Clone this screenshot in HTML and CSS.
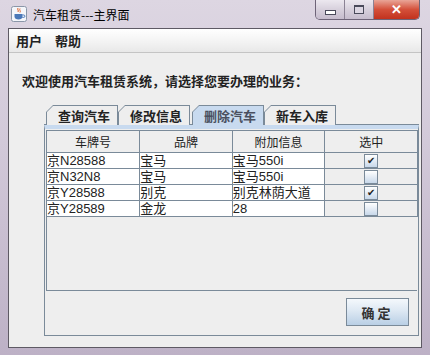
FILE: index.html
```html
<!DOCTYPE html>
<html lang="zh-CN">
<head>
  <meta charset="UTF-8">
  <title>汽车租赁---主界面</title>
  <link rel="stylesheet" href="styles.css">
</head>
<body>

  <div class="window">
    <div class="titlebar">
      <svg class="app-icon" width="16" height="16" viewBox="0 0 16 16">
        <rect x="0.5" y="0.5" width="15" height="15" rx="2" fill="#f4f6fa" stroke="#8a96a8"/>
        <path d="M7 2c-1 1.5 1 2.5 0 4M9 2.5c-1 1.5 1 2.5 0 4" stroke="#e0612a" stroke-width="1" fill="none"/>
        <path d="M3.5 8h8v2.5c0 1.8-1.6 3-4 3s-4-1.2-4-3z" fill="#4a78b8"/>
        <path d="M11.5 9h1.2a1.2 1.2 0 0 1 0 2.4h-1.4" stroke="#4a78b8" fill="none"/>
      </svg>
      <span class="title">汽车租赁---主界面</span>
      <div class="win-buttons">
        <span class="win-btn min"><i></i></span>
        <span class="win-btn max"><i></i></span>
        <span class="win-btn close">✕</span>
      </div>
    </div>

    <div class="client">
      <div class="menubar">
        <span class="menu">用户</span>
        <span class="menu">帮助</span>
      </div>

      <p class="welcome">欢迎使用汽车租赁系统，请选择您要办理的业务：</p>

      <div class="tabs">
        <span class="tab">查询汽车</span>
        <span class="tab">修改信息</span>
        <span class="tab selected">删除汽车</span>
        <span class="tab">新车入库</span>
      </div>

      <div class="tab-panel">
        <div class="scroll-pane">
          <table class="car-table">
            <thead>
              <tr><th>车牌号</th><th>品牌</th><th>附加信息</th><th>选中</th></tr>
            </thead>
            <tbody>
              <tr><td>京N28588</td><td>宝马</td><td>宝马550i</td><td class="check-cell"><span class="checkbox">✔</span></td></tr>
              <tr><td>京N32N8</td><td>宝马</td><td>宝马550i</td><td class="check-cell"><span class="checkbox"></span></td></tr>
              <tr><td>京Y28588</td><td>别克</td><td>别克林荫大道</td><td class="check-cell"><span class="checkbox">✔</span></td></tr>
              <tr><td>京Y28589</td><td>金龙</td><td>28</td><td class="check-cell"><span class="checkbox"></span></td></tr>
            </tbody>
          </table>
        </div>
        <div class="button-row">
          <button class="ok-button">确定</button>
        </div>
      </div>
    </div>
  </div>

</body>
</html>
```

FILE: styles.css
```css
body {
  margin: 0;
  font-family: "Liberation Sans", "Noto Sans CJK SC", sans-serif;
}
.window {
  width: 430px;
  height: 355px;
  box-sizing: border-box;
  padding: 0 8px 7px 8px;
  background: linear-gradient(180deg, #ddd6e2 0%, #d2c9d9 40%, #bdb1c6 100%);
  display: flex;
  flex-direction: column;
}
.titlebar {
  height: 28px;
  display: flex;
  align-items: center;
  position: relative;
}
.app-icon {
  margin: 0 6px 0 3px;
}
.title {
  font-size: 12px;
  color: #000;
  font-family: "Noto Sans CJK SC", sans-serif;
}
.win-buttons {
  position: absolute;
  top: 0;
  right: 2px;
  display: flex;
  height: 19px;
  border: 1px solid #6e6478;
  border-top: none;
  border-radius: 0 0 5px 5px;
  overflow: hidden;
}
.win-btn {
  display: flex;
  align-items: center;
  justify-content: center;
  width: 28px;
  background: linear-gradient(180deg, #ece8ef 0%, #d7d0dc 50%, #c6bccd 100%);
  border-right: 1px solid #8b8294;
}
.win-btn.min i {
  width: 9px;
  height: 3px;
  border: 1px solid #4a4a5a;
  background: #fff;
  margin-top: 5px;
}
.win-btn.max i {
  width: 8px;
  height: 6px;
  border: 1px solid #4a4a5a;
  border-top-width: 2px;
  background: #dcd6e2;
}
.win-btn.close {
  width: 45px;
  border-right: none;
  background: linear-gradient(180deg, #e9a597 0%, #d4503a 50%, #c2321e 100%);
  color: #fff;
  font-size: 13px;
  font-weight: bold;
}
.client {
  flex: 1;
  border: 1px solid #5e5a64;
  background: #eeeeee;
  display: flex;
  flex-direction: column;
}
.menubar {
  height: 23px;
  display: flex;
  align-items: center;
  padding-left: 7px;
  gap: 13px;
  background: linear-gradient(180deg, #ffffff 0%, #f2f2f2 60%, #e8e8e8 100%);
  border-bottom: 1px solid #c4c4c4;
}
.menu {
  font-family: "Noto Sans CJK SC", sans-serif;
  font-size: 13px;
  font-weight: bold;
  color: #222;
}
.welcome {
  margin: 19px 0 0 13px;
  height: 17px;
  line-height: 17px;
  font-family: "Noto Sans CJK SC", sans-serif;
  font-size: 13px;
  font-weight: bold;
  color: #222;
}
.tabs {
  display: flex;
  margin: 16px 0 0 37px;
  height: 20px;
}
.tab {
  width: 72px;
  height: 20px;
  box-sizing: border-box;
  position: relative;
  display: flex;
  align-items: center;
  justify-content: center;
  padding-left: 4px;
  font-family: "Noto Sans CJK SC", sans-serif;
  font-size: 13px;
  font-weight: bold;
  color: #222;
  background: #7a8a99;
  clip-path: polygon(7px 0, 100% 0, 100% 100%, 0 100%, 0 7px);
  z-index: 0;
}
.tab::before {
  content: "";
  position: absolute;
  inset: 1px 1px 0 1px;
  background: #eeeeee;
  clip-path: polygon(6px 0, 100% 0, 100% 100%, 0 100%, 0 6px);
  z-index: -1;
}
.tab.selected {
  margin-left: 2px;
  color: #4a5060;
}
.tab.selected::before {
  background: #c8daef;
  bottom: -1px;
}
.tab-panel {
  width: 375px;
  height: 211px;
  box-sizing: border-box;
  margin-left: 35px;
  border: 1px solid #7a8a99;
  border-top: 4px solid #c8daef;
  box-shadow: 0 -1px 0 #7a8a99;
  padding: 1px 1px 0 1px;
  display: flex;
  flex-direction: column;
}
.scroll-pane {
  height: 160px;
  border: 1px solid #7a8a99;
  border-top: none;
  border-right: none;
  background: #eeeeee;
}
.car-table {
  width: 371px;
  border-collapse: collapse;
  table-layout: fixed;
  font-size: 13px;
}
.car-table th {
  height: 21px;
  padding: 0;
  font-weight: normal;
  font-size: 12px;
  color: #222;
  background: #eeeeee;
  border: 1px solid #7a8a99;
  border-left: none;
  font-family: "Noto Sans CJK SC", sans-serif;
}
.car-table td {
  height: 15px;
  padding: 0;
  line-height: 15px;
  background: #fff;
  color: #222;
  border-right: 1px solid #7a8a99;
  border-bottom: 1px solid #7a8a99;
  white-space: nowrap;
  overflow: hidden;
}
.car-table td.check-cell {
  background: #eeeeee;
  text-align: center;
}
.checkbox {
  display: inline-block;
  width: 12px;
  height: 12px;
  border: 1px solid #7a8a99;
  background: linear-gradient(180deg, #ffffff 0%, #c8d8ea 100%);
  vertical-align: middle;
  font-size: 10px;
  line-height: 12px;
  color: #222;
  margin-top: -2px;
}
.button-row {
  display: flex;
  justify-content: flex-end;
  padding: 7px 8px 0 0;
}
.ok-button {
  width: 63px;
  height: 28px;
  border: 1px solid #7a8a99;
  background: linear-gradient(180deg, #f4f8fc 0%, #dde8f3 45%, #b9cfe5 100%);
  font-family: "Noto Sans CJK SC", sans-serif;
  font-size: 13px;
  font-weight: bold;
  letter-spacing: 3px;
  padding-left: 6px;
  color: #333;
}
```
